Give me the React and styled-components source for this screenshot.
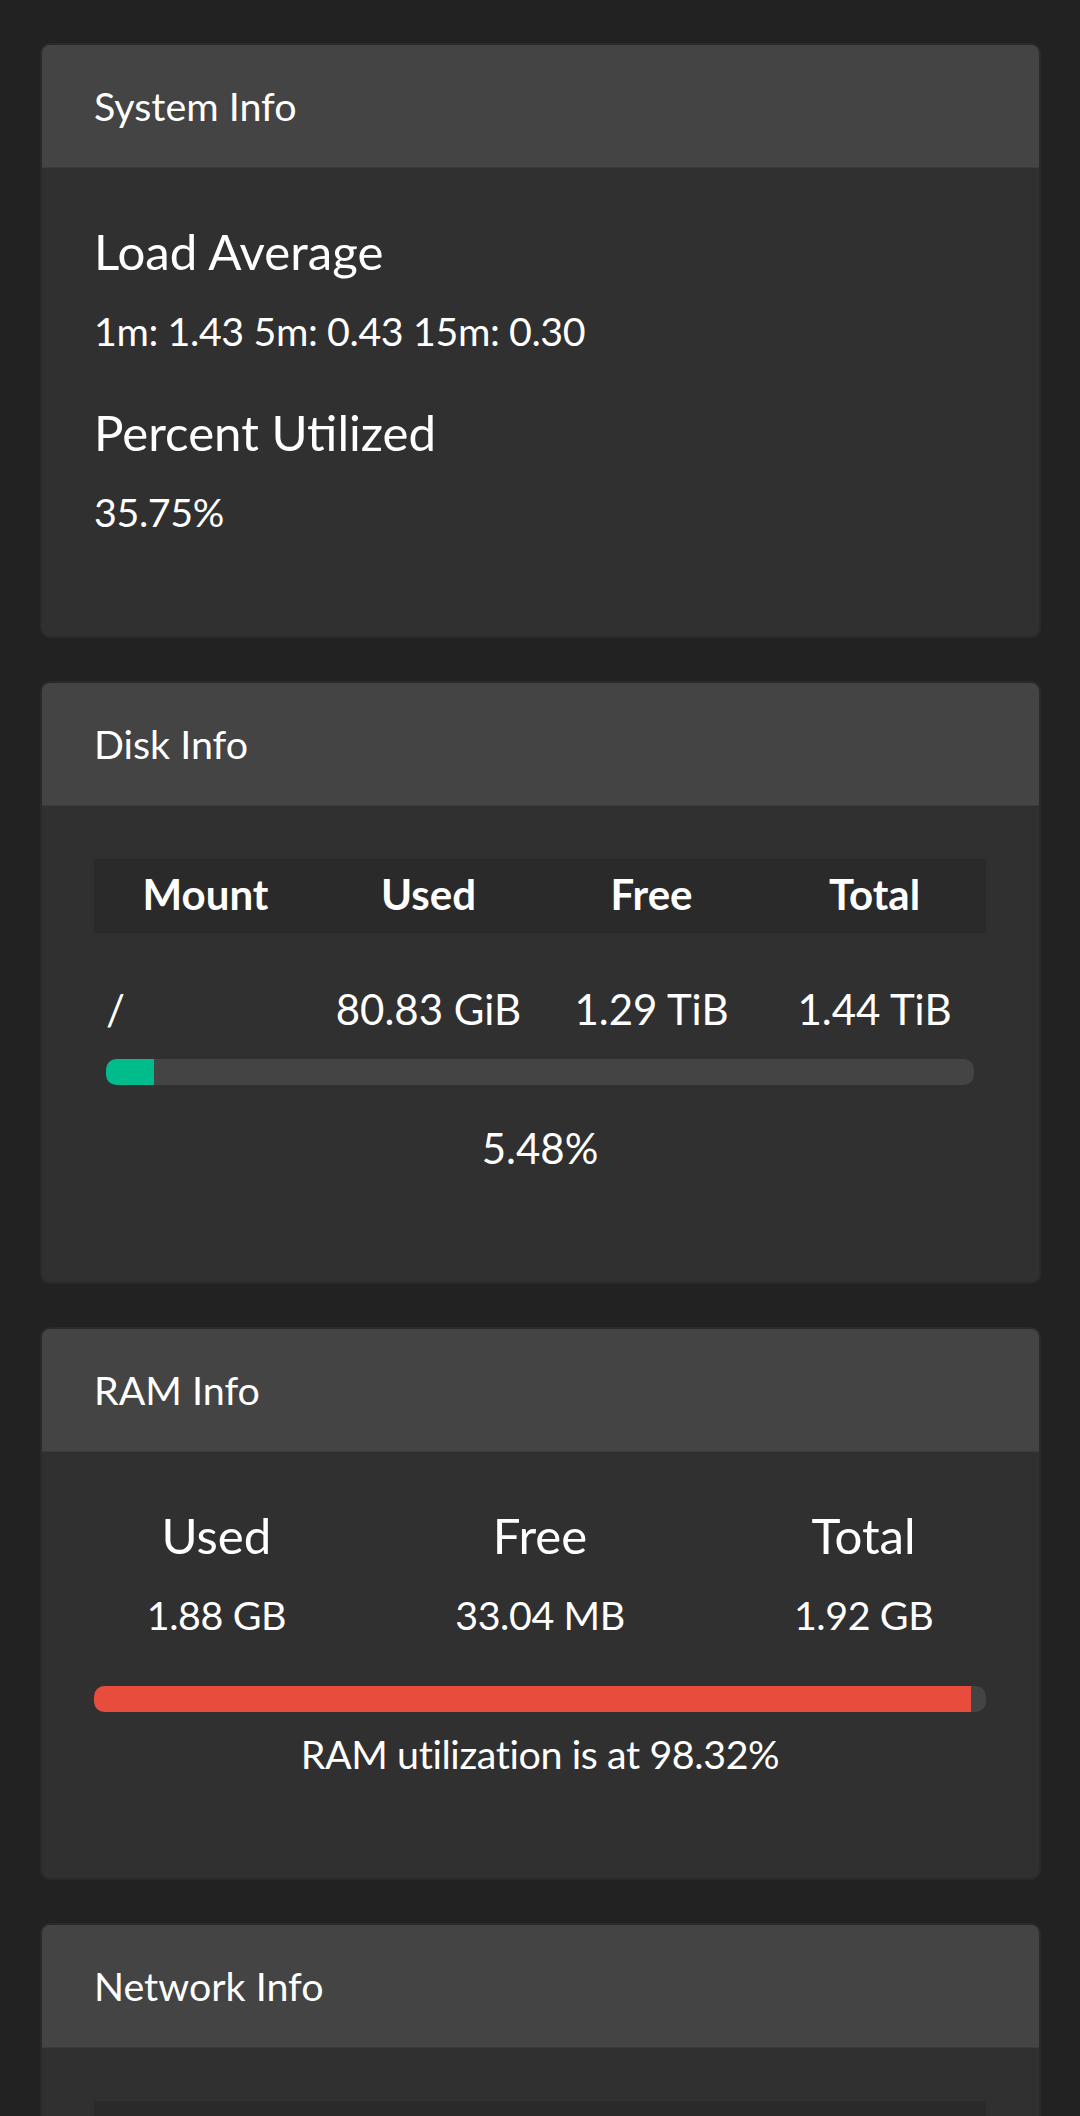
import React from 'react';
import styled, { createGlobalStyle } from 'styled-components';

const GlobalStyle = createGlobalStyle`
  body {
    margin: 0;
    background: #222222;
    color: #ffffff;
    font-family: Lato, "Open Sans", sans-serif;
    font-size: 39.4px;
    line-height: 59px;
  }
`

const Page = styled.div`
  display: flex;
  flex-direction: column;
  gap: 43px;
  padding: 43px 39.5px 60px;
`

const Card = styled.section`
  background: #303030;
  border: 2px solid rgba(0, 0, 0, 0.125);
  border-radius: 10px;
  overflow: hidden;
`

const CardHeader = styled.div`
  background: #444444;
  padding: 31px 52.5px 32px;
  border-bottom: 1px solid rgba(0, 0, 0, 0.125);
  font-size: 39.4px;
  line-height: 59px;
`

const CardBody = styled.div`
  padding: 53px 52.5px 52.5px;
`

const Heading = styled.h5`
  margin: 0 0 21px;
  font-size: 49.2px;
  font-weight: 400;
  line-height: 59px;
  text-align: ${p => (p.center ? 'center' : 'left')};
`

const Text = styled.p`
  margin: ${p => p.margin || '0 0 42px'};
  letter-spacing: -0.4px;
  text-align: ${p => (p.center ? 'center' : 'left')};
`

const Table = styled.table`
  width: 100%;
  margin-bottom: 49.5px;
  border-collapse: collapse;
  table-layout: fixed;
  font-size: 42px;
  line-height: 63px;
`

const Th = styled.th`
  background: #2a2a2a;
  padding: 4.5px 12px 6.5px;
  font-weight: 700;
  text-align: center;
`

const Td = styled.td`
  padding: ${p => p.pad || '45.3px 12px 0'};
  text-align: ${p => p.align || 'center'};
  white-space: nowrap;
`

// header band of a table whose rows are still below the fold
const HeadBand = styled.div`
  height: 74px;
  background: #2a2a2a;
`

const Track = styled.div`
  height: 26px;
  background: #444444;
  border-radius: 10.5px;
  overflow: hidden;
  display: flex;
`

const Fill = styled.div`
  height: 100%;
  background: ${p => p.color};
`

const StatGrid = styled.div`
  display: grid;
  grid-template-columns: repeat(3, 1fr);
  margin: 0 -39.4px;
  text-align: center;
`

const Progress = ({ value, color }) => (
  <Track>
    <Fill color={color} style={{ width: `${value}%` }} />
  </Track>
)

const disks = [{ mount: '/', used: '80.83 GiB', free: '1.29 TiB', total: '1.44 TiB', pct: 5.48 }]

const ram = [
  { label: 'Used', value: '1.88 GB' },
  { label: 'Free', value: '33.04 MB' },
  { label: 'Total', value: '1.92 GB' },
]

export default function App() {
  return (
    <Page>
      <GlobalStyle />
      <Card>
        <CardHeader>System Info</CardHeader>
        <CardBody>
          <Heading>Load Average</Heading>
          <Text>1m: 1.43 5m: 0.43 15m: 0.30</Text>
          <Heading>Percent Utilized</Heading>
          <Text>35.75%</Text>
        </CardBody>
      </Card>

      <Card>
        <CardHeader>Disk Info</CardHeader>
        <CardBody>
          <Table>
            <thead>
              <tr>
                <Th>Mount</Th>
                <Th>Used</Th>
                <Th>Free</Th>
                <Th>Total</Th>
              </tr>
            </thead>
            <tbody>
              {disks.map(d => (
                <React.Fragment key={d.mount}>
                  <tr>
                    <Td align="left">{d.mount}</Td>
                    <Td>{d.used}</Td>
                    <Td>{d.free}</Td>
                    <Td>{d.total}</Td>
                  </tr>
                  <tr>
                    <Td colSpan={4} pad="18.7px 12px 0">
                      <Progress value={d.pct} color="#00bc8c" />
                    </Td>
                  </tr>
                  <tr>
                    <Td colSpan={4} pad="31.3px 12px 0">{d.pct}%</Td>
                  </tr>
                </React.Fragment>
              ))}
            </tbody>
          </Table>
        </CardBody>
      </Card>

      <Card>
        <CardHeader>RAM Info</CardHeader>
        <CardBody>
          <StatGrid>
            {ram.map(r => (
              <div key={r.label}>
                <Heading center>{r.label}</Heading>
                <Text center>{r.value}</Text>
              </div>
            ))}
          </StatGrid>
          <Progress value={98.32} color="#e74c3c" />
          <Text center margin="12.5px 0 42px">RAM utilization is at 98.32%</Text>
        </CardBody>
      </Card>

      <Card>
        <CardHeader>Network Info</CardHeader>
        <CardBody>
          <HeadBand />
        </CardBody>
      </Card>
    </Page>
  );
}
